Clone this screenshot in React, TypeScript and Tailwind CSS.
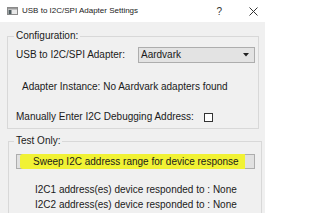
import React from 'react';

const font = { fontFamily: '"Liberation Sans", Arial, sans-serif' };

const TitleIcon = () => (
  <svg width="11" height="8" viewBox="0 0 11 8" className="shrink-0">
    <rect x="0.5" y="0.5" width="10" height="7" fill="#e8e8e8" stroke="#8a8a8a" />
    <rect x="1" y="1" width="9" height="1.5" fill="#9a9a9a" />
    <rect x="1.5" y="3" width="3" height="4" fill="#4d5a5e" />
  </svg>
);

const CloseIcon = () => (
  <svg width="9" height="9" viewBox="0 0 9 9">
    <path d="M0.5 0.5 L8.5 8.5 M8.5 0.5 L0.5 8.5" stroke="#333" strokeWidth="1" />
  </svg>
);

const ComboArrow = () => (
  <svg width="6" height="4" viewBox="0 0 6 4">
    <path d="M0 0 H6 L3 3.5 Z" fill="#222" />
  </svg>
);

export default function App() {
  return (
    <div className="w-[320px] h-[213px] bg-white overflow-hidden text-[#1a1a1a]" style={font}>
      <div className="w-[265px]">
        {/* title bar */}
        <div className="h-[22px] flex items-center bg-white pl-[7px]">
          <TitleIcon />
          <span className="ml-[4px] text-[8px] text-[#222]">USB to I2C/SPI Adapter Settings</span>
          <span className="ml-auto text-[10px] text-[#333]">?</span>
          <span className="ml-[27px] mr-[7px] flex items-center">
            <CloseIcon />
          </span>
        </div>

        {/* body */}
        <div className="bg-[#f0f0f0] pt-[8px] h-[191px] text-[10px] leading-[12px]">
          <fieldset className="ml-[7px] w-[252px] border border-[#d8d8d8] pl-[8px] pb-[5px]">
            <legend className="px-[2px] -ml-[2px] leading-[12px]">Configuration:</legend>
            <div className="mt-[5px] flex items-center h-[16px]">
              <span className="w-[122px]">USB to I2C/SPI Adapter:</span>
              <div className="w-[117px] h-[16px] border border-[#adadad] bg-[#e3e3e3] flex items-center pl-[2px] pr-[5px]">
                <span>Aardvark</span>
                <span className="ml-auto flex items-center">
                  <ComboArrow />
                </span>
              </div>
            </div>
            <div className="mt-[18px] pl-[6px]">Adapter Instance: No Aardvark adapters found</div>
            <div className="mt-[18px] flex items-center">
              <span>Manually Enter I2C Debugging Address:</span>
              <span className="ml-[10px] w-[9px] h-[9px] border border-[#333] bg-white" />
            </div>
          </fieldset>

          <fieldset className="mt-[6px] ml-[8px] w-[254px] border border-[#d8d8d8] pl-[7px] pb-[10px]">
            <legend className="px-[2px] -ml-[2px] leading-[12px]">Test Only:</legend>
            <button className="mt-[7px] w-[239px] h-[15px] border border-[#adadad] bg-[#e1e1e1] flex items-center">
              <span className="ml-[3px] w-[225px] h-[15px] bg-[#f1f234] rounded-l-[3px] flex items-center pl-[13px] text-[10px]">
                Sweep I2C address range for device response
              </span>
            </button>
            <div className="mt-[15px] pl-[19px]">I2C1 address(es) device responded to : None</div>
            <div className="mt-[3px] pl-[19px]">I2C2 address(es) device responded to : None</div>
          </fieldset>
        </div>
      </div>
    </div>
  );
}
